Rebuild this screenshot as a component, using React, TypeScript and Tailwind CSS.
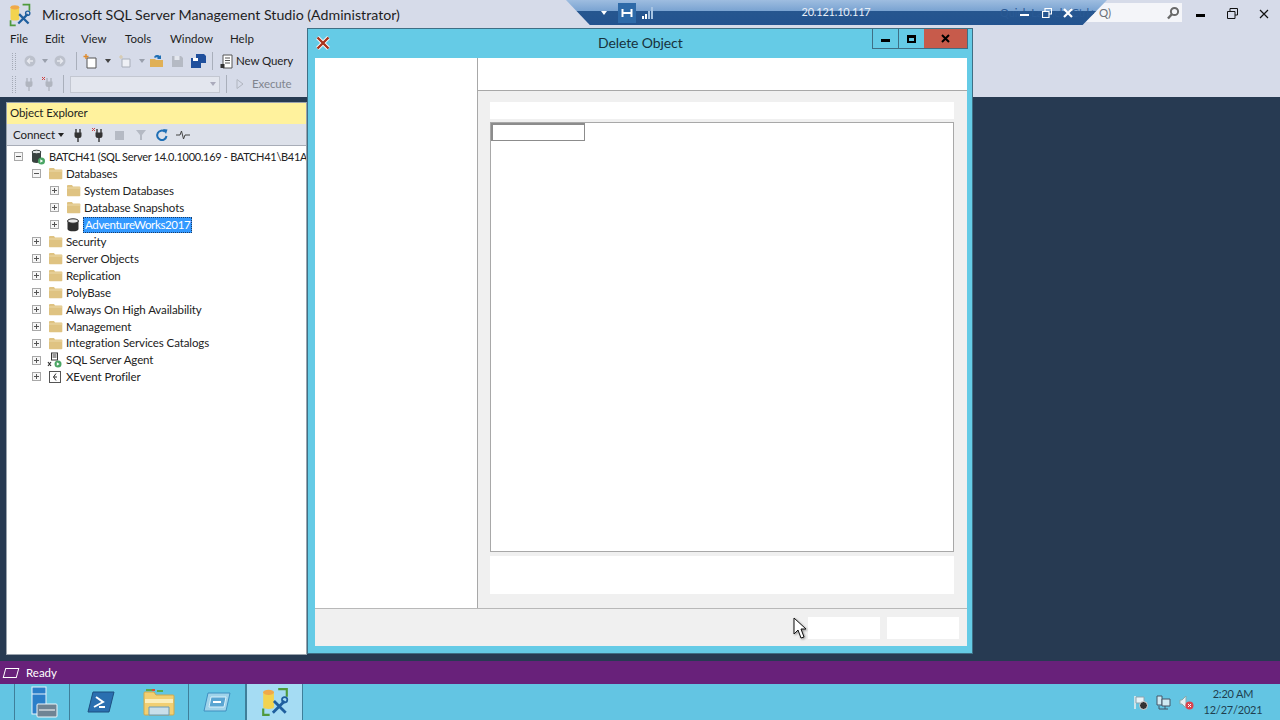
import React from 'react';

const Folder = () => (
  <svg width="15" height="13" viewBox="0 0 15 13" className="shrink-0">
    <path d="M1 2a1 1 0 0 1 1-1h4l1 1.500h6.500a.8.800 0 0 1 .8.800V11.500a.8.800 0 0 1-.8.800H1.800a.8.800 0 0 1-.8-.800z" fill="#dfc382" />
    <path d="M1 4h13.300" stroke="#ecd9a8" strokeWidth="1" />
  </svg>
);

const Expander = ({ open }: { open?: boolean }) => (
  <span className="w-[9px] h-[9px] border border-[#a8a8a8] bg-[#f6f6f6] flex items-center justify-center relative shrink-0">
    <span className="w-[5px] h-px bg-[#555]" />
    {!open && <span className="absolute w-px h-[5px] bg-[#555]" />}
  </span>
);

const DbIcon = () => (
  <svg width="14" height="14" viewBox="0 0 14 14" className="shrink-0">
    <path d="M1.500 3v8c0 1.400 2.500 2.300 5.500 2.300s5.500-.9 5.500-2.300V3z" fill="#2e2e2e" />
    <ellipse cx="7" cy="3" rx="5.500" ry="2.200" fill="#e8e8e8" stroke="#2e2e2e" />
  </svg>
);

const ServerIcon = () => (
  <svg width="16" height="16" viewBox="0 0 16 16" className="shrink-0">
    <path d="M2 3v9c0 1.200 2 2 4.500 2S11 13.200 11 12V3z" fill="#38423f" />
    <ellipse cx="6.500" cy="3" rx="4.500" ry="1.800" fill="#dfe3e3" stroke="#38423f" />
    <circle cx="11.500" cy="12" r="3.500" fill="#4aa564" />
    <path d="M10.300 10.200l2.800 1.800-2.800 1.800z" fill="#fff" />
  </svg>
);

const AgentIcon = () => (
  <svg width="16" height="16" viewBox="0 0 16 16" className="shrink-0">
    <rect x="4.500" y="1" width="6" height="7" fill="#fff" stroke="#333" />
    <path d="M5.500 3h4M5.500 5h4" stroke="#333" />
    <path d="M1 10l3 4M4 10l-3 4" stroke="#333" strokeWidth="1.200" />
    <circle cx="11" cy="12" r="3.500" fill="#4aa564" />
    <path d="M9.800 10.200l2.800 1.800-2.800 1.800z" fill="#fff" />
  </svg>
);

const XEventIcon = () => (
  <svg width="14" height="14" viewBox="0 0 14 14" className="shrink-0">
    <rect x="1.500" y="1.500" width="11" height="11" fill="#fff" stroke="#555" />
    <path d="M8 3.500L5.500 7 8 10.500" fill="none" stroke="#333" />
    <path d="M5.500 7H9" stroke="#333" />
  </svg>
);

const TreeRow = ({ indent, open, icon, label, selected }: { indent: string; open?: boolean; icon: React.ReactNode; label: string; selected?: boolean }) => (
  <div className={`h-[16.93px] flex items-center whitespace-nowrap ${indent}`}>
    <Expander open={open} />
    <span className="w-[25px] flex justify-center shrink-0 pl-[3px]">{icon}</span>
    {selected ? (
      <span className="bg-[#3399ff] text-white border border-dotted border-[#1c3c66] px-px ml-[-1px] leading-[14px] tracking-[-0.35px]">{label}</span>
    ) : (
      <span>{label}</span>
    )}
  </div>
);

const Grip = () => (
  <span className="w-[4px] h-[17px] ml-[12px] mr-[8px] shrink-0 border-x border-dotted border-[#a4aab6]" />
);

const Sep = () => <span className="block w-px h-[18px] bg-[#a9afbb] shrink-0" />;

const Caret = ({ color = '#444' }: { color?: string }) => (
  <svg width="6" height="4" viewBox="0 0 6 4" className="shrink-0"><path d="M0 0h6L3 4z" fill={color} /></svg>
);

const Plug = ({ color, crossed }: { color: string; crossed?: boolean }) => (
  <svg width="14" height="14" viewBox="0 0 14 14" className="shrink-0">
    <path d="M5 1v4M9 1v4M7 10v4" fill="none" stroke={color} strokeWidth="1.400" />
    <path d="M3.500 4.500h7v3a2.500 2.500 0 0 1-2.500 2.500H6a2.500 2.500 0 0 1-2.500-2.500z" fill={color} />
    {crossed && <path d="M0 0l3 3M3 0L0 3" stroke="#c44" strokeWidth="1" />}
  </svg>
);

const menuItems = [
  ['File', 'w-[35px]'],
  ['Edit', 'w-[36px]'],
  ['View', 'w-[44px]'],
  ['Tools', 'w-[45px]'],
  ['Window', 'w-[60px]'],
  ['Help', 'w-[40px]'],
];

const uiFont = 'font-["Lato",sans-serif]';

const SsmsIcon = ({ size }: { size: number }) => (
  <svg width={size} height={size} viewBox="0 0 28 28" className="shrink-0">
    <path d="M3 5c0-2 10-2 10 0v14c0 2-10 2-10 0z" fill="#f3d34f" />
    <ellipse cx="8" cy="5" rx="5" ry="2.500" fill="#f0a94a" />
    <path d="M17 2h8v7M3 20v6h6" fill="none" stroke="#4f9a3c" strokeWidth="2" />
    <path d="M12 24l11-11M13 13l11 11" stroke="#1f5f9e" strokeWidth="2.600" />
    <circle cx="23" cy="12" r="2.500" fill="none" stroke="#1f5f9e" strokeWidth="1.600" />
  </svg>
);

const OeSlot = ({ children }: { children: React.ReactNode }) => (
  <span className="w-[21px] flex justify-center shrink-0">{children}</span>
);

const ObjectExplorer = () => (
  <div className="w-[301px] h-[553px] ml-[6px] mt-[5px] bg-white border border-[#9aa3ad] text-[11.5px] tracking-[-0.1px] text-[#222]">
    <div className="h-[21px] bg-[#fff29d] flex items-center pl-[3px] pb-[2px] text-[#1e1e1e]">Object Explorer</div>
    <div className="h-[22px] bg-[#dde1ea] border-b border-[#a8adb8] flex items-center pl-[6px] pt-px">
      <span className="w-[54px] flex items-center gap-[3px]">Connect <Caret color="#222" /></span>
      <OeSlot><Plug color="#333" /></OeSlot>
      <OeSlot><Plug color="#333" crossed /></OeSlot>
      <OeSlot><span className="w-[9px] h-[9px] bg-[#b5bac4]" /></OeSlot>
      <OeSlot><svg width="12" height="12" viewBox="0 0 12 12"><path d="M1 1h10L7 6v5H5V6z" fill="#b5bac4" /></svg></OeSlot>
      <OeSlot><svg width="14" height="14" viewBox="0 0 14 14"><path d="M11.500 8a4.700 4.700 0 1 1-1.600-4.300" fill="none" stroke="#1f6fb5" strokeWidth="2" /><path d="M8 1l4.500.5L11 6z" fill="#1f6fb5" /></svg></OeSlot>
      <OeSlot><svg width="14" height="10" viewBox="0 0 14 10"><path d="M0 5h4l1.500-4 2 8L9 5h5" fill="none" stroke="#444" /></svg></OeSlot>
    </div>
    <div className="pt-[2.500px] pl-[4px] overflow-hidden">
      <div className="h-[16.93px] flex items-center whitespace-nowrap pl-[3px]">
        <Expander open />
        <span className="w-[27px] flex justify-center shrink-0 pl-[2px]"><ServerIcon /></span>
        <span className="ml-[-1px] text-[11px] tracking-[-0.3px]">BATCH41 (SQL Server 14.0.1000.169 - BATCH41\B41A</span>
      </div>
      <TreeRow indent="pl-[21px]" open icon={<Folder />} label="Databases" />
      <TreeRow indent="pl-[39px]" icon={<Folder />} label="System Databases" />
      <TreeRow indent="pl-[39px]" icon={<Folder />} label="Database Snapshots" />
      <TreeRow indent="pl-[39px]" icon={<DbIcon />} label="AdventureWorks2017" selected />
      {['Security', 'Server Objects', 'Replication', 'PolyBase', 'Always On High Availability', 'Management', 'Integration Services Catalogs'].map(l => (
        <TreeRow key={l} indent="pl-[21px]" icon={<Folder />} label={l} />
      ))}
      <TreeRow indent="pl-[21px]" icon={<AgentIcon />} label="SQL Server Agent" />
      <TreeRow indent="pl-[21px]" icon={<XEventIcon />} label="XEvent Profiler" />
    </div>
  </div>
);

const DeleteDialog = () => (
  <div className="absolute left-[307px] top-[28px] w-[666px] h-[626px] bg-[#65cbe6] border border-[#3f6f85] flex flex-col">
    <div className="h-[29px] flex items-center relative shrink-0">
      <svg width="16" height="16" viewBox="0 0 16 16" className="ml-[7px] mt-[-2px]">
        <path d="M2.500 2.500l11 11M13.500 2.500l-11 11" stroke="#fff" strokeWidth="4" />
        <path d="M2.500 2.500l11 11M13.500 2.500l-11 11" stroke="#a8331c" strokeWidth="2.400" />
      </svg>
      <span className="absolute left-[290px] top-[3px] text-[14px] tracking-[-0.1px] text-[#17323c]">Delete Object</span>
      <div className="absolute right-[4px] top-0 h-[20px] flex border border-t-0 border-[#3f6f85]">
        <span className="w-[26px] flex items-center justify-center border-r border-[#3f6f85]"><span className="w-[9px] h-[3px] bg-black mt-[4px]" /></span>
        <span className="w-[25px] flex items-center justify-center"><span className="w-[9px] h-[8px] border-2 border-black border-t-[3px]" /></span>
        <span className="w-[43px] bg-[#c75b4b] flex items-center justify-center">
          <svg width="9" height="9" viewBox="0 0 9 9"><path d="M1 1l7 7M8 1L1 8" stroke="#000" strokeWidth="2" /></svg>
        </span>
      </div>
    </div>
    <div className="ml-[7px] mr-[5px] flex-1 flex flex-col bg-[#f0f0f0] min-h-0">
      <div className="flex flex-1 min-h-0 border-b border-[#b8b8b8]">
        <div className="w-[163px] bg-white border-r border-[#a8a8a8] shrink-0" />
        <div className="flex-1 flex flex-col">
          <div className="h-[33px] bg-white border-b border-[#a8a8a8] shrink-0" />
          <div className="pl-[12px] pr-[13px] pt-[11px] flex flex-col">
            <div className="h-[17px] bg-white" />
            <div className="mt-[3px] h-[430px] bg-white border border-[#a8a8a8]">
              <div className="w-[94px] h-[18px] border border-[#8c8c8c] border-l-2 border-t-2 bg-white" />
            </div>
            <div className="mt-[4px] h-[38px] bg-white" />
          </div>
        </div>
      </div>
      <div className="h-[37px] shrink-0 flex items-start justify-end gap-[7px] pt-[8px] pr-[8px]">
        <span className="w-[72px] h-[22px] bg-white" />
        <span className="w-[72px] h-[22px] bg-white" />
      </div>
    </div>
    <div className="h-[7px] shrink-0" />
  </div>
);

const RdpBar = () => (
  <div className="absolute left-[566px] top-0 w-[541px] h-[25px] bg-[linear-gradient(#9ebde0_0%,#7ba4d2_42%,#26568f_46%,#23538f_100%)] [clip-path:polygon(0_0,100%_0,95.500%_100%,4.400%_100%)] flex items-center text-white">
    <span className="ml-[35px] shrink-0"><Caret color="#fff" /></span>
    <span className="ml-[11px] w-[18px] h-[20px] bg-[#2e6aa8] flex items-center justify-center shrink-0">
      <svg width="12" height="8" viewBox="0 0 12 8"><path d="M1.500 0v8M10.500 0v8M1.500 4h9" stroke="#fff" strokeWidth="2" /></svg>
    </span>
    <svg width="12" height="12" viewBox="0 0 12 12" className="ml-[5px] shrink-0">
      <path d="M1 9h2v3H1zM4 7h2v5H4z" fill="#fff" />
      <path d="M7 4h2v8H7zM10 0h2v12h-2z" fill="#a8c4e2" />
    </svg>
    <span className="ml-[148px] w-[70px] shrink-0 text-center text-[11px] tracking-[-0.2px] text-[#e8eff7]">20.121.10.117</span>
    <span className="absolute left-[434px] top-[5px] text-[11px] text-[#2a5a95] whitespace-nowrap">Quick Launch (Ctrl+</span>
    <span className="ml-[149px] w-[9px] h-[2px] bg-white mt-[5px] shrink-0 relative" />
    <svg width="10" height="10" viewBox="0 0 10 10" className="ml-[13px] shrink-0 relative"><path d="M3 3V.5h6.500V6H7M.5 3.500h6.500v6H.5z" fill="none" stroke="#fff" strokeWidth="1.200" /></svg>
    <svg width="10" height="10" viewBox="0 0 10 10" className="ml-[11px] shrink-0 relative"><path d="M1 1l8 8M9 1L1 9" stroke="#fff" strokeWidth="2.200" /></svg>
  </div>
);

const Cursor = () => (
  <svg width="14" height="23" viewBox="0 0 14 23" className="absolute left-[793px] top-[617px] drop-shadow-[1px_1px_1px_rgba(0,0,0,0.4)]">
    <path d="M1 1v16l4-4 3 8 3-1-3-8h5z" fill="#fff" stroke="#111" strokeWidth="1" />
  </svg>
);

const Taskbar = () => (
  <div className="h-[36px] bg-[#63c5e3] flex items-stretch shrink-0">
    <span className="w-[15px] border-r border-[#3f7f9a]" />
    <span className="w-[55px] border-r border-[#3f7f9a] flex items-center justify-center">
      <svg width="32" height="32" viewBox="0 0 32 32">
        <rect x="6" y="1" width="14" height="27" fill="#2a7fc9" stroke="#e6f4fb" />
        <path d="M6 8h14" stroke="#e6f4fb" />
        <rect x="11" y="18" width="20" height="13" rx="1" fill="#6f8494" stroke="#eef6fa" />
        <path d="M13 24h16" stroke="#fff" />
      </svg>
    </span>
    <span className="w-[119px] border-r border-[#3f7f9a] flex items-center">
      <svg width="28" height="24" viewBox="0 0 28 24" className="ml-[17px] shrink-0">
        <path d="M6 2h21l-5 20H1z" fill="#2a6fb0" stroke="#1d4f80" />
        <path d="M9 7l7 5-9 5M12 17h6" fill="none" stroke="#fff" strokeWidth="2" />
      </svg>
      <svg width="32" height="30" viewBox="0 0 32 30" className="ml-[28px] shrink-0">
        <path d="M1 6a1 1 0 0 1 1-1h9l2 3h17a1 1 0 0 1 1 1v18a1 1 0 0 1-1 1H2a1 1 0 0 1-1-1z" fill="#f2cf72" stroke="#cfa94a" />
        <path d="M3 3h6M14 4h6" stroke="#5aaa4a" strokeWidth="2" />
        <path d="M9 3h3" stroke="#d84a3a" strokeWidth="2" />
        <path d="M2 12h28v4H2z" fill="#fbeebb" />
        <path d="M6 20h20v8H6z" fill="#c9dfea" stroke="#6d9ab3" />
      </svg>
    </span>
    <span className="w-[58px] border-r-2 border-[#3f7f9a] flex items-center justify-center">
      <svg width="28" height="20" viewBox="0 0 28 20">
        <path d="M5 1h22l-4 18H1z" fill="#9fd3ea" stroke="#3f8fc0" />
        <path d="M8 5h15l-2 10H6z" fill="#5aa5d2" stroke="#d8f0fa" />
        <path d="M10 9h8v2h-8z" fill="#fff" />
      </svg>
    </span>
    <span className="w-[56px] bg-[#a5dcf3] border-r border-[#3f7f9a] flex items-center justify-center">
      <SsmsIcon size={30} />
    </span>
    <span className="flex-1" />
    <div className="flex items-center gap-[8px] pr-[12px]">
      <svg width="15" height="15" viewBox="0 0 15 15">
        <path d="M2 1v13" stroke="#eee" strokeWidth="1.500" />
        <path d="M3 2h8v6H3z" fill="#e8f4f8" stroke="#90a4ae" />
        <circle cx="10.500" cy="10.500" r="4" fill="#333" stroke="#ddd" />
      </svg>
      <svg width="15" height="15" viewBox="0 0 15 15">
        <path d="M1 1h5v9H1z" fill="#cfeaf3" stroke="#456" />
        <path d="M6 4h8v7H6z" fill="#cfeaf3" stroke="#456" />
        <path d="M3 11v3h9M9 11v3" stroke="#456" fill="none" />
      </svg>
      <svg width="15" height="15" viewBox="0 0 15 15">
        <path d="M1 5h2l4-4v12L3 9H1z" fill="#e6eef2" stroke="#8aa" />
        <circle cx="10.500" cy="10.500" r="4" fill="#d9434e" />
        <path d="M9 9l3 3M12 9l-3 3" stroke="#fff" />
      </svg>
      <span className="w-[70px] ml-[-4px] text-center text-[11px] tracking-[-0.2px] leading-[16px] text-[#1f3f50]">
        <div>2:20 AM</div>
        <div>12/27/2021</div>
      </span>
    </div>
  </div>
);

export default function App() {
  return (
    <div className={`relative w-[1280px] h-[720px] overflow-hidden flex flex-col bg-[#273a52] ${uiFont}`}>
      <div className="h-[97px] bg-[#d6dbe9] shrink-0 text-[#1e1e1e]">
        <div className="h-[30px] flex items-center relative">
          <span className="ml-[8px] w-[34px]"><SsmsIcon size={24} /></span>
          <span className="text-[14.2px]">Microsoft SQL Server Management Studio (Administrator)</span>
          <div className="absolute left-[1085px] top-[3px] w-[97px] h-[19px] bg-[#f4f5f9] flex items-center justify-between pr-[2px]">
            <span className="text-[11.5px] text-[#6b7078] pl-[14px]">Q)</span>
            <svg width="14" height="14" viewBox="0 0 14 14"><circle cx="8.500" cy="5.500" r="3.600" fill="none" stroke="#6a6a6a" strokeWidth="2" /><path d="M6 8l-4 4.500" stroke="#6a6a6a" strokeWidth="2.400" /></svg>
          </div>
          <div className="absolute left-[1196px] top-[8px] flex items-center">
            <span className="w-[9px] h-[3px] bg-black mt-[3px]" />
            <svg width="11" height="11" viewBox="0 0 11 11" className="ml-[22px]"><path d="M3 3V.5h7.500V7H8M.5 3.500h7.500v7H.5z" fill="none" stroke="#111" /></svg>
            <svg width="10" height="10" viewBox="0 0 10 10" className="ml-[21px]"><path d="M1 1l8 8M9 1L1 9" stroke="#111" strokeWidth="1.200" /></svg>
          </div>
        </div>
        <div className="h-[17px] flex items-center pl-[10px] text-[11.5px]">
          {menuItems.map(([name, w]) => <span key={name} className={w}>{name}</span>)}
        </div>
        <div className="h-[28px] flex items-center text-[11.5px] tracking-[-0.1px]">
          <Grip />
          <svg width="14" height="14" viewBox="0 0 14 14" className="ml-[-1px]"><circle cx="7" cy="7" r="5.500" fill="#bcc1cc" /><path d="M10 7H5M7 4.500L4.500 7 7 9.500" fill="none" stroke="#e8eaf0" strokeWidth="1.400" /></svg>
          <span className="ml-[5px]"><Caret color="#9aa0ac" /></span>
          <svg width="14" height="14" viewBox="0 0 14 14" className="ml-[5px]"><circle cx="7" cy="7" r="5.500" fill="#bcc1cc" /><path d="M4 7h5M7 4.500L9.500 7 7 9.500" fill="none" stroke="#e8eaf0" strokeWidth="1.400" /></svg>
          <span className="ml-[9px]"><Sep /></span>
          <svg width="15" height="15" viewBox="0 0 15 15" className="ml-[6px]"><path d="M4 4h9v10H4z" fill="#fff" stroke="#555" /><path d="M3 0v5M0.500 2.500h5" stroke="#e08a2a" strokeWidth="1.400" /></svg>
          <span className="ml-[7px]"><Caret /></span>
          <svg width="14" height="14" viewBox="0 0 14 14" className="ml-[7px]"><path d="M4 5h8v8H4z" fill="#eef0f5" stroke="#a8aeb9" /><path d="M3 1v4M1 3h4" stroke="#d8c9a8" strokeWidth="1.200" /></svg>
          <span className="ml-[7px]"><Caret color="#9aa0ac" /></span>
          <svg width="15" height="14" viewBox="0 0 15 14" className="ml-[4px]"><path d="M1 5h5l1 1h7v7H1z" fill="#e0b056" /><path d="M5 3a4 4 0 0 1 6-1l1-1v4H8l1-1a2 2 0 0 0-3 0z" fill="#1f6fb5" /></svg>
          <svg width="13" height="13" viewBox="0 0 13 13" className="ml-[7px]"><path d="M1 1h9l2 2v9H1z" fill="#b5bac4" /><path d="M3.500 1h5v4h-5z" fill="#e4e7ee" /></svg>
          <svg width="15" height="14" viewBox="0 0 15 14" className="ml-[7px]"><path d="M5 0h8l2 2v7H5z" fill="#1f4f9c" /><path d="M0 4h8l2 2v8H0z" fill="#1f4f9c" /><path d="M2 4h5v3H2z" fill="#fff" /></svg>
          <span className="ml-[6px]"><Sep /></span>
          <svg width="13" height="15" viewBox="0 0 13 15" className="ml-[7px]"><path d="M3 1h9v13H3z" fill="#fff" stroke="#555" /><path d="M5 4h5M5 6.500h5M5 9h5" stroke="#555" /><rect x="0.500" y="10" width="4" height="4" fill="#333" /></svg>
          <span className="ml-[3px]">New Query</span>
        </div>
        <div className="h-[18px] flex items-center text-[11.5px] tracking-[-0.1px] text-[#80858f]">
          <Grip />
          <span className="ml-[-2px]"><Plug color="#b0b5bf" /></span>
          <span className="ml-[6px]"><Plug color="#b0b5bf" crossed /></span>
          <span className="ml-[7px]"><Sep /></span>
          <span className="ml-[6px] w-[150px] h-[17px] bg-[#e3e6ee] border border-[#c3c7d1] flex items-center justify-end pr-[3px]"><Caret color="#aab" /></span>
          <span className="ml-[6px]"><Sep /></span>
          <svg width="8" height="10" viewBox="0 0 8 10" className="ml-[9px]"><path d="M1 .5l6 4.500-6 4.500z" fill="none" stroke="#b0b5bf" /></svg>
          <span className="ml-[8px]">Execute</span>
        </div>
      </div>
      <div className="h-[564px] shrink-0">
        <ObjectExplorer />
      </div>
      <div className="h-[23px] bg-[#68217a] flex items-center text-white text-[11.5px] shrink-0">
        <span className="ml-[4px] w-[14px] h-[10px] border border-white skew-x-[-15deg]" />
        <span className="ml-[8px]">Ready</span>
      </div>
      <Taskbar />
      <RdpBar />
      <DeleteDialog />
      <Cursor />
    </div>
  );
}
